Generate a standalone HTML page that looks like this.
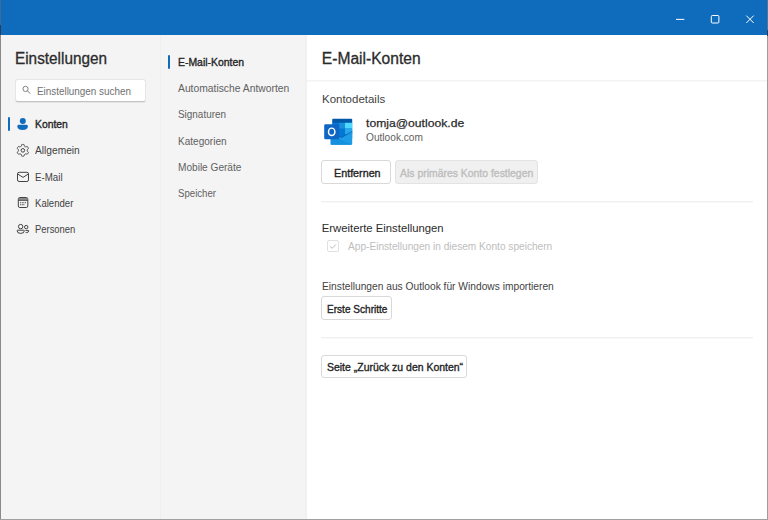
<!DOCTYPE html>
<html><head><meta charset="utf-8"><style>
html,body{margin:0;padding:0;}
body{width:768px;height:520px;position:relative;overflow:hidden;background:#fff;font-family:"Liberation Sans",sans-serif;}
.a{position:absolute;}
.t{position:absolute;white-space:nowrap;transform-origin:0 0;}
</style></head><body>
<div class="a" style="left:0;top:0;width:768px;height:35px;background:#0f6cbd;"></div>
<div class="a" style="left:0;top:35px;width:160px;height:485px;background:#f4f4f4;"></div>
<div class="a" style="left:160px;top:35px;width:1px;height:485px;background:#efefef;"></div>
<div class="a" style="left:161px;top:35px;width:146px;height:485px;background:#f4f4f4;"></div>
<div class="a" style="left:305px;top:35px;width:2px;height:485px;background:#f1f1f1;"></div>
<div class="a" style="left:307px;top:80px;width:460px;height:1px;background:#f4f4f4;"></div>
<div class="a" style="left:307px;top:81px;width:460px;height:1px;background:#f8f8f8;"></div>
<div class="a" style="left:321px;top:201px;width:432px;height:1px;background:#f1f1f1;"></div>
<div class="a" style="left:321px;top:202px;width:432px;height:1px;background:#f8f8f8;"></div>
<div class="a" style="left:321px;top:337px;width:432px;height:1px;background:#f1f1f1;"></div>
<div class="a" style="left:321px;top:338px;width:432px;height:1px;background:#f8f8f8;"></div>
<!-- window borders -->
<div class="a" style="left:0;top:0;width:1px;height:520px;background:#8a8a8a;"></div>
<div class="a" style="left:0;top:0;width:1px;height:25px;background:#3d6a96;"></div>
<div class="a" style="left:0;top:25px;width:1px;height:10px;background:#23405c;"></div>
<div class="a" style="left:767px;top:35px;width:1px;height:485px;background:#9c9c9c;"></div>
<div class="a" style="left:767px;top:0;width:1px;height:30px;background:#4a76a2;"></div>
<div class="a" style="left:767px;top:30px;width:1px;height:6px;background:#23405c;"></div>
<div class="a" style="left:0;top:519px;width:768px;height:1px;background:#a0a0a0;"></div>
<!-- search box -->
<div class="a" style="left:15px;top:79px;width:129px;height:20.5px;background:#fff;border:1px solid #e6e6e6;border-bottom-color:#c4c4c4;border-radius:3px;box-shadow:0 1px 0 #e4e4e4;"></div>
<!-- nav indicator -->
<div class="a" style="left:8px;top:117px;width:2px;height:14px;background:#0f6cbd;border-radius:1px;"></div>
<div class="a" style="left:168px;top:55px;width:2px;height:14px;background:#0f6cbd;border-radius:1px;"></div>
<!-- buttons -->
<div class="a" style="left:321px;top:160px;width:68px;height:22px;background:#fff;border:1px solid #d9d9d9;border-radius:3px;"></div>
<div class="a" style="left:395px;top:160px;width:141px;height:22px;background:#f0f0f0;border:1px solid #e3e3e3;border-radius:3px;"></div>
<div class="a" style="left:321px;top:296px;width:68.5px;height:22px;background:#fff;border:1px solid #d9d9d9;border-radius:3px;"></div>
<div class="a" style="left:321px;top:355px;width:143.5px;height:21px;background:#fff;border:1px solid #d9d9d9;border-radius:3px;"></div>
<!-- checkbox -->
<div class="a" style="left:327px;top:240px;width:10px;height:10px;border:1px solid #e0e0e0;border-radius:2px;background:#fff;"></div>
<div class="t" style="left:15.20px;top:51.23px;font-size:15.80px;line-height:15.80px;color:#2b2b2b;-webkit-text-stroke:0.3px #2b2b2b;transform:scaleX(0.9697);">Einstellungen</div>
<div class="t" style="left:36.60px;top:85.86px;font-size:10.80px;line-height:10.80px;color:#707070;transform:scaleX(0.9157);">Einstellungen suchen</div>
<div class="t" style="left:34.50px;top:119.26px;font-size:10.80px;line-height:10.80px;color:#242424;-webkit-text-stroke:0.35px #242424;transform:scaleX(0.9610);">Konten</div>
<div class="t" style="left:34.90px;top:145.46px;font-size:10.80px;line-height:10.80px;color:#424242;transform:scaleX(0.9449);">Allgemein</div>
<div class="t" style="left:35.40px;top:171.66px;font-size:10.80px;line-height:10.80px;color:#424242;transform:scaleX(0.9014);">E-Mail</div>
<div class="t" style="left:35.40px;top:197.86px;font-size:10.80px;line-height:10.80px;color:#424242;transform:scaleX(0.8878);">Kalender</div>
<div class="t" style="left:35.40px;top:224.06px;font-size:10.80px;line-height:10.80px;color:#424242;transform:scaleX(0.8718);">Personen</div>
<div class="t" style="left:177.50px;top:56.86px;font-size:10.80px;line-height:10.80px;color:#242424;-webkit-text-stroke:0.35px #242424;transform:scaleX(0.9647);">E-Mail-Konten</div>
<div class="t" style="left:177.70px;top:83.16px;font-size:10.80px;line-height:10.80px;color:#616161;transform:scaleX(0.9555);">Automatische Antworten</div>
<div class="t" style="left:178.00px;top:109.46px;font-size:10.80px;line-height:10.80px;color:#616161;transform:scaleX(0.9192);">Signaturen</div>
<div class="t" style="left:178.00px;top:135.66px;font-size:10.80px;line-height:10.80px;color:#616161;transform:scaleX(0.9307);">Kategorien</div>
<div class="t" style="left:178.00px;top:161.76px;font-size:10.80px;line-height:10.80px;color:#616161;transform:scaleX(0.9348);">Mobile Geräte</div>
<div class="t" style="left:178.00px;top:188.16px;font-size:10.80px;line-height:10.80px;color:#616161;transform:scaleX(0.8919);">Speicher</div>
<div class="t" style="left:321.80px;top:50.59px;font-size:15.60px;line-height:15.60px;color:#2b2b2b;-webkit-text-stroke:0.3px #2b2b2b;">E-Mail-Konten</div>
<div class="t" style="left:321.80px;top:93.53px;font-size:11.30px;line-height:11.30px;color:#424242;transform:scaleX(1.0160);">Kontodetails</div>
<div class="t" style="left:365.70px;top:116.98px;font-size:11.60px;line-height:11.60px;color:#2b2b2b;-webkit-text-stroke:0.25px #2b2b2b;transform:scaleX(1.0484);">tomja@outlook.de</div>
<div class="t" style="left:365.70px;top:131.66px;font-size:10.80px;line-height:10.80px;color:#616161;transform:scaleX(0.9399);">Outlook.com</div>
<div class="t" style="left:334.40px;top:167.66px;font-size:10.80px;line-height:10.80px;color:#242424;-webkit-text-stroke:0.35px #242424;transform:scaleX(0.9953);">Entfernen</div>
<div class="t" style="left:400.00px;top:167.66px;font-size:10.80px;line-height:10.80px;color:#bdbdbd;-webkit-text-stroke:0.35px #bdbdbd;transform:scaleX(0.9654);">Als primäres Konto festlegen</div>
<div class="t" style="left:321.80px;top:222.73px;font-size:11.30px;line-height:11.30px;color:#2b2b2b;">Erweiterte Einstellungen</div>
<div class="t" style="left:347.90px;top:240.66px;font-size:10.80px;line-height:10.80px;color:#bdbdbd;transform:scaleX(0.9374);">App-Einstellungen in diesem Konto speichern</div>
<div class="t" style="left:321.80px;top:281.16px;font-size:10.80px;line-height:10.80px;color:#424242;transform:scaleX(0.9467);">Einstellungen aus Outlook für Windows importieren</div>
<div class="t" style="left:326.60px;top:303.56px;font-size:10.80px;line-height:10.80px;color:#242424;-webkit-text-stroke:0.35px #242424;transform:scaleX(0.9321);">Erste Schritte</div>
<div class="t" style="left:326.60px;top:362.46px;font-size:10.80px;line-height:10.80px;color:#242424;-webkit-text-stroke:0.35px #242424;transform:scaleX(0.9690);">Seite „Zurück zu den Konten“</div>
<svg class="a" style="left:0;top:0" width="768" height="520" viewBox="0 0 768 520">
<!-- title bar controls -->
<rect x="676" y="18.85" width="8.3" height="1" fill="#fff"/>
<rect x="711.3" y="15.5" width="7.6" height="7.5" rx="1" fill="none" stroke="#fff" stroke-width="1"/>
<path d="M746.3 15.6 L753.7 23 M753.7 15.6 L746.3 23" stroke="#fff" stroke-width="1" fill="none"/>
<!-- search icon -->
<circle cx="25.55" cy="88.9" r="2.6" fill="none" stroke="#7a7a7a" stroke-width="0.95"/>
<path d="M27.5 90.85 L30 93.4" stroke="#7a7a7a" stroke-width="1" stroke-linecap="round"/>
<!-- person filled -->
<circle cx="22.8" cy="120.9" r="3" fill="#0f6cbd"/>
<path d="M17.4 126.2 Q17.4 124.8 18.8 124.8 L26.4 124.8 Q27.8 124.8 27.8 126.2 Q27.8 130 22.6 130 Q17.4 130 17.4 126.2 Z" fill="#0f6cbd"/>
<!-- gear -->
<g transform="translate(22.85 150.35)" fill="none" stroke="#424242" stroke-width="1">
<path d="M0.00 -5.90 L0.21 -5.90 L0.41 -5.89 L0.62 -5.87 L0.82 -5.84 L1.02 -5.81 L1.21 -5.68 L1.33 -5.33 L1.40 -4.87 L1.45 -4.45 L1.53 -4.19 L1.67 -4.13 L1.81 -4.07 L1.95 -4.00 L2.09 -3.93 L2.22 -3.85 L2.36 -3.77 L2.49 -3.69 L2.62 -3.60 L2.74 -3.51 L2.87 -3.42 L3.13 -3.48 L3.52 -3.64 L3.95 -3.81 L4.32 -3.89 L4.52 -3.79 L4.65 -3.63 L4.77 -3.47 L4.89 -3.30 L5.00 -3.13 L5.11 -2.95 L5.21 -2.77 L5.30 -2.59 L5.39 -2.40 L5.47 -2.21 L5.54 -2.02 L5.53 -1.80 L5.28 -1.51 L4.92 -1.23 L4.57 -0.97 L4.39 -0.77 L4.41 -0.62 L4.43 -0.47 L4.44 -0.31 L4.45 -0.16 L4.45 -0.00 L4.45 0.16 L4.44 0.31 L4.43 0.47 L4.41 0.62 L4.39 0.77 L4.57 0.97 L4.92 1.23 L5.28 1.51 L5.53 1.80 L5.54 2.02 L5.47 2.21 L5.39 2.40 L5.30 2.59 L5.21 2.77 L5.11 2.95 L5.00 3.13 L4.89 3.30 L4.77 3.47 L4.65 3.63 L4.52 3.79 L4.32 3.89 L3.95 3.81 L3.52 3.64 L3.13 3.48 L2.87 3.42 L2.74 3.51 L2.62 3.60 L2.49 3.69 L2.36 3.77 L2.22 3.85 L2.09 3.93 L1.95 4.00 L1.81 4.07 L1.67 4.13 L1.53 4.19 L1.45 4.45 L1.40 4.87 L1.33 5.33 L1.21 5.68 L1.02 5.81 L0.82 5.84 L0.62 5.87 L0.41 5.89 L0.21 5.90 L0.00 5.90 L-0.21 5.90 L-0.41 5.89 L-0.62 5.87 L-0.82 5.84 L-1.02 5.81 L-1.21 5.68 L-1.33 5.33 L-1.40 4.87 L-1.45 4.45 L-1.53 4.19 L-1.67 4.13 L-1.81 4.07 L-1.95 4.00 L-2.09 3.93 L-2.23 3.85 L-2.36 3.77 L-2.49 3.69 L-2.62 3.60 L-2.74 3.51 L-2.87 3.42 L-3.13 3.48 L-3.52 3.64 L-3.95 3.81 L-4.32 3.89 L-4.52 3.79 L-4.65 3.63 L-4.77 3.47 L-4.89 3.30 L-5.00 3.13 L-5.11 2.95 L-5.21 2.77 L-5.30 2.59 L-5.39 2.40 L-5.47 2.21 L-5.54 2.02 L-5.53 1.80 L-5.28 1.51 L-4.92 1.23 L-4.57 0.97 L-4.39 0.77 L-4.41 0.62 L-4.43 0.47 L-4.44 0.31 L-4.45 0.16 L-4.45 0.00 L-4.45 -0.16 L-4.44 -0.31 L-4.43 -0.47 L-4.41 -0.62 L-4.39 -0.77 L-4.57 -0.97 L-4.92 -1.23 L-5.28 -1.51 L-5.53 -1.80 L-5.54 -2.02 L-5.47 -2.21 L-5.39 -2.40 L-5.30 -2.59 L-5.21 -2.77 L-5.11 -2.95 L-5.00 -3.13 L-4.89 -3.30 L-4.77 -3.47 L-4.65 -3.63 L-4.52 -3.79 L-4.32 -3.89 L-3.95 -3.81 L-3.52 -3.64 L-3.13 -3.48 L-2.87 -3.42 L-2.74 -3.51 L-2.62 -3.60 L-2.49 -3.69 L-2.36 -3.77 L-2.23 -3.85 L-2.09 -3.93 L-1.95 -4.00 L-1.81 -4.07 L-1.67 -4.13 L-1.53 -4.19 L-1.45 -4.45 L-1.40 -4.87 L-1.33 -5.33 L-1.21 -5.68 L-1.02 -5.81 L-0.82 -5.84 L-0.62 -5.87 L-0.41 -5.89 L-0.21 -5.90 Z" stroke-linejoin="round"/>
<circle cx="0" cy="0" r="1.8"/>
</g>
<!-- mail -->
<rect x="17.5" y="172.3" width="11" height="9.2" rx="1.6" fill="none" stroke="#424242" stroke-width="1"/>
<path d="M18 174.2 L23 177.4 L28 174.2" fill="none" stroke="#424242" stroke-width="1"/>
<!-- calendar -->
<rect x="18.3" y="197.5" width="9.5" height="10" rx="1.5" fill="none" stroke="#424242" stroke-width="1"/>
<rect x="18.6" y="198" width="8.9" height="2" fill="#8c8c8c"/>
<rect x="18.3" y="199.9" width="9.5" height="0.9" fill="#424242"/>
<g fill="#5a5a5a"><rect x="20.2" y="202" width="0.9" height="1.2"/><rect x="21.8" y="202" width="0.9" height="1.2"/><rect x="23.4" y="202" width="0.9" height="1.2"/><rect x="25" y="202" width="0.9" height="1.2"/>
<rect x="20.2" y="203.9" width="0.9" height="1.4"/><rect x="21.8" y="203.9" width="0.9" height="1.4"/><rect x="23.4" y="203.9" width="0.9" height="1.4"/></g>
<!-- people -->
<g fill="none" stroke="#424242" stroke-width="1">
<circle cx="20.65" cy="226.6" r="2.2"/>
<path d="M17.1 230.8 Q17.1 230.2 17.7 230.2 L23.7 230.2 Q24.3 230.2 24.3 230.8 Q24.3 233.4 20.7 233.4 Q17.1 233.4 17.1 230.8 Z"/>
<circle cx="26.2" cy="227.1" r="1.7"/>
<path d="M25.4 230.4 L28.3 230.4 Q28.7 230.4 28.7 230.8 Q28.7 232.6 26.5 232.6 L25.6 232.6"/>
</g>
<!-- outlook icon -->
<path d="M332.2 123 L332.2 119.8 Q332.2 118.8 333.2 118.8 L351.2 118.8 Q352.2 118.8 352.2 119.8 L352.2 123 Z" fill="#0358a7"/>
<rect x="332.2" y="122.8" width="20" height="16" fill="#0078d4"/>
<rect x="339.2" y="122.8" width="5.8" height="5.7" fill="#1a8fdc"/>
<rect x="345" y="122.8" width="7.2" height="5.7" fill="#50d9ff"/>
<rect x="345" y="128.5" width="7.2" height="5.8" fill="#28a8ea"/>
<path d="M330.7 132 L341.5 137.5 L352.2 131.4 L352.2 143.7 Q352.2 144.7 351.2 144.7 L331.7 144.7 Q330.7 144.7 330.7 143.7 Z" fill="#1f9ce8"/>
<path d="M330.7 144.7 L330.7 134 L341.5 140 L352.2 144.7 Z" fill="#1490df"/>
<path d="M338.8 136.3 L341.5 137.5 L352.2 131.4" fill="none" stroke="#0a4f9a" stroke-width="0.9" opacity="0.7"/>
<rect x="324.2" y="124.3" width="15" height="15" rx="1.3" fill="#0f65c4"/>
<ellipse cx="331.7" cy="131.8" rx="3.2" ry="3.7" fill="none" stroke="#fff" stroke-width="1.45"/>
<!-- checkbox check -->
<path d="M329.9 246.3 L332.2 248.3 L336 244.3" fill="none" stroke="#bdbdbd" stroke-width="1"/>
</svg>
</body></html>
